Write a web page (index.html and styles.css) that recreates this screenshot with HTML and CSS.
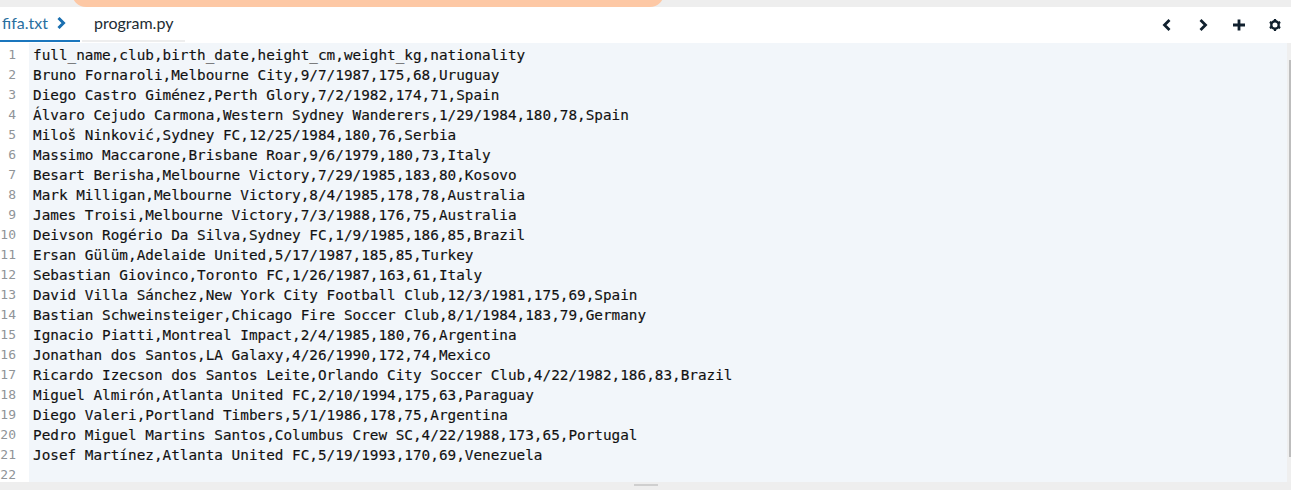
FILE: index.html
```html
<!DOCTYPE html>
<html lang="en">
<head>
<meta charset="utf-8">
<title>fifa.txt</title>
<link rel="stylesheet" href="styles.css">
</head>
<body>
<div class="topstrip"><div class="banner"></div></div>
<header class="tabbar">
  <nav class="tabs">
    <a class="tab active"><span class="tab-name">fifa.txt</span>
      <svg class="chev" viewBox="0 0 10 12" width="10" height="12"><path d="M2.500 1 7.500 6l-5 5" fill="none" stroke="currentColor" stroke-width="3"/></svg>
    </a>
    <a class="tab"><span class="tab-name">program.py</span></a>
  </nav>
  <div class="tools">
    <svg class="tool" viewBox="0 0 16 16" width="16" height="16"><path d="M10.500 3 5.500 8l5 5" fill="none" stroke="currentColor" stroke-width="2.800"/></svg>
    <svg class="tool" viewBox="0 0 16 16" width="16" height="16"><path d="M5.500 3l5 5-5 5" fill="none" stroke="currentColor" stroke-width="2.800"/></svg>
    <svg class="tool" viewBox="0 0 16 16" width="16" height="16"><path d="M8 2.500v11M2 8h12" fill="none" stroke="currentColor" stroke-width="2.800"/></svg>
    <svg class="tool" viewBox="0 0 16 16" width="16" height="16"><circle cx="8" cy="8" r="3.700" fill="none" stroke="currentColor" stroke-width="2.400"/><path d="M8 2v2M8 12v2M2.800 5l1.700 1M11.500 10l1.700 1M2.800 11l1.700-1M11.500 6l1.700-1" fill="none" stroke="currentColor" stroke-width="2.200"/></svg>
  </div>
</header>
<main class="editor">
  <div class="gutter">
    <span>1</span><span>2</span><span>3</span><span>4</span><span>5</span><span>6</span><span>7</span><span>8</span><span>9</span><span>10</span><span>11</span><span>12</span><span>13</span><span>14</span><span>15</span><span>16</span><span>17</span><span>18</span><span>19</span><span>20</span><span>21</span><span>22</span>
  </div>
  <pre class="code">full_name,club,birth_date,height_cm,weight_kg,nationality
Bruno Fornaroli,Melbourne City,9/7/1987,175,68,Uruguay
Diego Castro Giménez,Perth Glory,7/2/1982,174,71,Spain
Álvaro Cejudo Carmona,Western Sydney Wanderers,1/29/1984,180,78,Spain
Miloš Ninković,Sydney FC,12/25/1984,180,76,Serbia
Massimo Maccarone,Brisbane Roar,9/6/1979,180,73,Italy
Besart Berisha,Melbourne Victory,7/29/1985,183,80,Kosovo
Mark Milligan,Melbourne Victory,8/4/1985,178,78,Australia
James Troisi,Melbourne Victory,7/3/1988,176,75,Australia
Deivson Rogério Da Silva,Sydney FC,1/9/1985,186,85,Brazil
Ersan Gülüm,Adelaide United,5/17/1987,185,85,Turkey
Sebastian Giovinco,Toronto FC,1/26/1987,163,61,Italy
David Villa Sánchez,New York City Football Club,12/3/1981,175,69,Spain
Bastian Schweinsteiger,Chicago Fire Soccer Club,8/1/1984,183,79,Germany
Ignacio Piatti,Montreal Impact,2/4/1985,180,76,Argentina
Jonathan dos Santos,LA Galaxy,4/26/1990,172,74,Mexico
Ricardo Izecson dos Santos Leite,Orlando City Soccer Club,4/22/1982,186,83,Brazil
Miguel Almirón,Atlanta United FC,2/10/1994,175,63,Paraguay
Diego Valeri,Portland Timbers,5/1/1986,178,75,Argentina
Pedro Miguel Martins Santos,Columbus Crew SC,4/22/1988,173,65,Portugal
Josef Martínez,Atlanta United FC,5/19/1993,170,69,Venezuela
</pre>
  <div class="scroll"><div class="thumb"></div></div>
</main>
<footer class="resize"><div class="handle"></div></footer>
</body>
</html>
```
FILE: styles.css
```css
* { box-sizing: border-box; }
html, body { margin: 0; height: 490px; overflow: hidden; background: #fff; }
.topstrip { height: 7px; background: #eeeeee; overflow: hidden; padding-left: 72px; }
.banner { width: 592px; height: 30px; margin-top: -23px; background: #fdc8a5; border-radius: 14px; }
.tabbar { height: 36px; background: #fff; display: flex; justify-content: space-between; }
.tabs { display: flex; gap: 2px; }
.tab { font: 16px/34px Lato, sans-serif; color: #222c33; display: flex; align-items: center; padding: 0 0 2px 12px; width: 103px; border-bottom: 2px solid #eeeeee; height: 35px; }
.tab.active { width: 80px; padding-left: 2px; color: #2a6f9f; border-bottom-color: #1a76bd; }
.chev { margin-left: 8px; color: #1a6fb0; }
.tools { display: flex; align-items: center; gap: 20px; padding: 0 8px 1px 0; color: #10202e; }
.editor { height: 439px; display: flex; background: #f2f6fa; }
.gutter { width: 29px; background: #fff; display: flex; flex-direction: column; padding-top: 2px; }
.gutter span { height: 20px; font: 13px/20px "DejaVu Sans Mono", monospace; color: #8f9498; text-align: right; padding-right: 13px; }
.code { flex: 1; margin: 0; padding: 2px 0 0 4px; font: 14.350px/20px "DejaVu Sans Mono", monospace; color: #111; -webkit-text-stroke: 0.15px #111; }
.scroll { width: 4px; background: #efefef; position: relative; }
.thumb { position: absolute; right: 0; top: 17px; width: 2px; height: 397px; background: #bdbdbd; }
.resize { height: 8px; background: #eeeeee; display: flex; justify-content: center; padding-top: 2px; }
.handle { width: 24px; height: 2px; background: #cfcfcf; }
```
